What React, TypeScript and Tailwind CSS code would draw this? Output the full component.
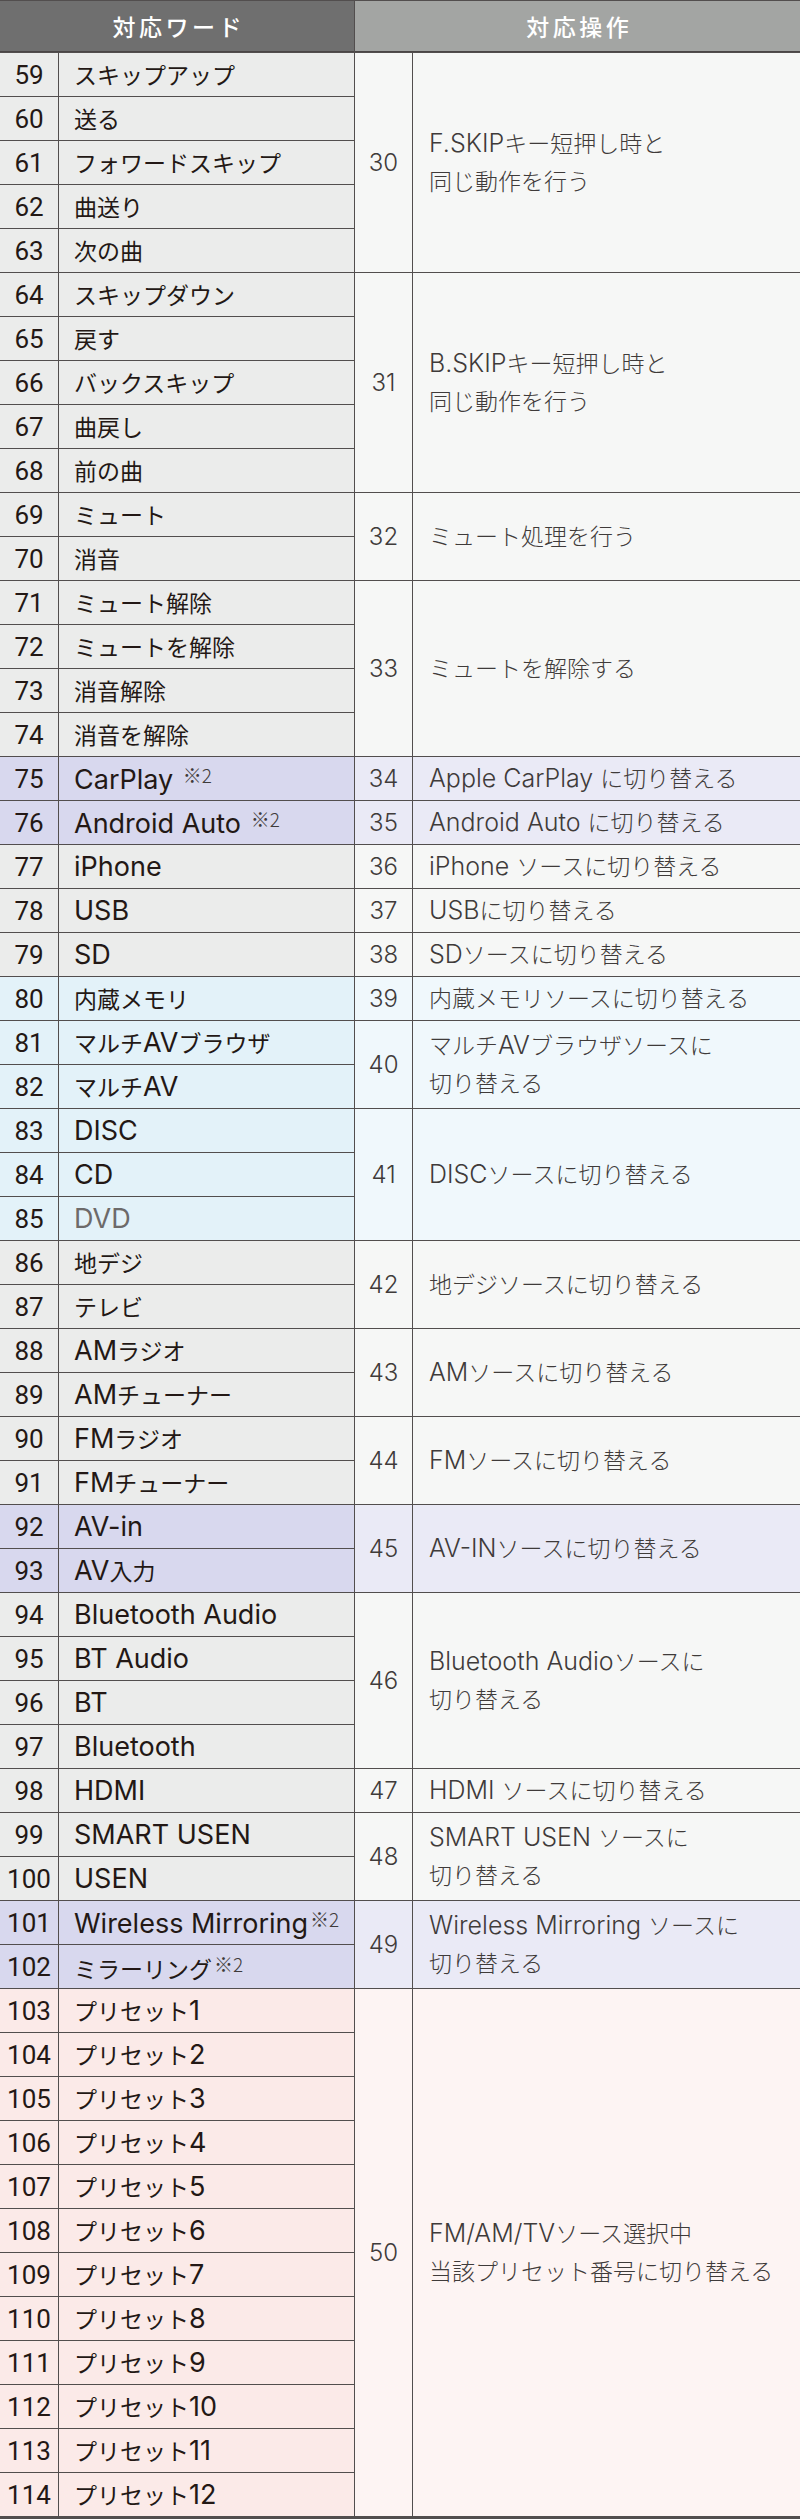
import React from "react";

type Tone = "gray" | "purple" | "blue" | "pink";

type Word = { no: number; text: string; note?: boolean; muted?: boolean };
type Group = { code: number; action: string[]; tone: Tone; words: Word[] };

const leftBg: Record<Tone, string> = {
  gray: "bg-[#ebeceb]",
  purple: "bg-[#d8d8ee]",
  blue: "bg-[#e3f2f9]",
  pink: "bg-[#fbeae8]",
};

const rightBg: Record<Tone, string> = {
  gray: "bg-[#f6f7f6]",
  purple: "bg-[#eaeaf6]",
  blue: "bg-[#f0f8fc]",
  pink: "bg-[#fdf4f3]",
};

const spans: Record<number, string> = {
  1: "row-span-1",
  2: "row-span-2",
  3: "row-span-3",
  4: "row-span-4",
  5: "row-span-5",
  12: "row-span-12",
};

const w = (no: number, text: string, extra: Partial<Word> = {}): Word => ({ no, text, ...extra });

const groups: Group[] = [
  {
    code: 30,
    tone: "gray",
    action: ["F.SKIPキー短押し時と", "同じ動作を行う"],
    words: [w(59, "スキップアップ"), w(60, "送る"), w(61, "フォワードスキップ"), w(62, "曲送り"), w(63, "次の曲")],
  },
  {
    code: 31,
    tone: "gray",
    action: ["B.SKIPキー短押し時と", "同じ動作を行う"],
    words: [w(64, "スキップダウン"), w(65, "戻す"), w(66, "バックスキップ"), w(67, "曲戻し"), w(68, "前の曲")],
  },
  { code: 32, tone: "gray", action: ["ミュート処理を行う"], words: [w(69, "ミュート"), w(70, "消音")] },
  {
    code: 33,
    tone: "gray",
    action: ["ミュートを解除する"],
    words: [w(71, "ミュート解除"), w(72, "ミュートを解除"), w(73, "消音解除"), w(74, "消音を解除")],
  },
  { code: 34, tone: "purple", action: ["Apple CarPlay に切り替える"], words: [w(75, "CarPlay ", { note: true })] },
  { code: 35, tone: "purple", action: ["Android Auto に切り替える"], words: [w(76, "Android Auto ", { note: true })] },
  { code: 36, tone: "gray", action: ["iPhone ソースに切り替える"], words: [w(77, "iPhone")] },
  { code: 37, tone: "gray", action: ["USBに切り替える"], words: [w(78, "USB")] },
  { code: 38, tone: "gray", action: ["SDソースに切り替える"], words: [w(79, "SD")] },
  { code: 39, tone: "blue", action: ["内蔵メモリソースに切り替える"], words: [w(80, "内蔵メモリ")] },
  {
    code: 40,
    tone: "blue",
    action: ["マルチAVブラウザソースに", "切り替える"],
    words: [w(81, "マルチAVブラウザ"), w(82, "マルチAV")],
  },
  {
    code: 41,
    tone: "blue",
    action: ["DISCソースに切り替える"],
    words: [w(83, "DISC"), w(84, "CD"), w(85, "DVD", { muted: true })],
  },
  { code: 42, tone: "gray", action: ["地デジソースに切り替える"], words: [w(86, "地デジ"), w(87, "テレビ")] },
  { code: 43, tone: "gray", action: ["AMソースに切り替える"], words: [w(88, "AMラジオ"), w(89, "AMチューナー")] },
  { code: 44, tone: "gray", action: ["FMソースに切り替える"], words: [w(90, "FMラジオ"), w(91, "FMチューナー")] },
  { code: 45, tone: "purple", action: ["AV-INソースに切り替える"], words: [w(92, "AV-in"), w(93, "AV入力")] },
  {
    code: 46,
    tone: "gray",
    action: ["Bluetooth Audioソースに", "切り替える"],
    words: [w(94, "Bluetooth Audio"), w(95, "BT Audio"), w(96, "BT"), w(97, "Bluetooth")],
  },
  { code: 47, tone: "gray", action: ["HDMI ソースに切り替える"], words: [w(98, "HDMI")] },
  {
    code: 48,
    tone: "gray",
    action: ["SMART USEN ソースに", "切り替える"],
    words: [w(99, "SMART USEN"), w(100, "USEN")],
  },
  {
    code: 49,
    tone: "purple",
    action: ["Wireless Mirroring ソースに", "切り替える"],
    words: [w(101, "Wireless Mirroring", { note: true }), w(102, "ミラーリング", { note: true })],
  },
  {
    code: 50,
    tone: "pink",
    action: ["FM/AM/TVソース選択中", "当該プリセット番号に切り替える"],
    words: Array.from({ length: 12 }, (_, i) => w(103 + i, `プリセット${i + 1}`)),
  },
];

const isLatin = (s: string) => /^[\x20-\x7E]+$/.test(s);

function Mixed({ text, latin, jp }: { text: string; latin: string; jp: string }) {
  const parts = text.split(/([\x20-\x7E]+)/).filter(Boolean);
  return (
    <>
      {parts.map((p, i) => (
        <span key={i} className={isLatin(p) ? latin : jp}>
          {p}
        </span>
      ))}
    </>
  );
}

export default function App() {
  return (
    <div className="w-[800px] bg-white">
      <div className="grid grid-cols-[58px_295px_57px_1fr] grid-rows-[51px_repeat(56,43px)] gap-px bg-[#524e4e] pt-px pb-[3px]">
        {/* header */}
        <div className="col-span-2 flex items-center justify-center border-b border-[#4a4646] bg-[#6f6f6f] pl-[0.15em] font-['Noto_Sans_CJK_JP',sans-serif] text-[23px] font-medium tracking-[0.15em] text-white">
          対応ワード
        </div>
        <div className="col-span-2 flex items-center justify-center border-b border-[#4a4646] bg-[#a3a5a3] pl-[0.15em] font-['Noto_Sans_CJK_JP',sans-serif] text-[23px] font-medium tracking-[0.15em] text-white">
          対応操作
        </div>

        {groups.map((g) =>
          g.words.map((wd, i) => (
            <React.Fragment key={wd.no}>
              <div
                className={`${leftBg[g.tone]} flex items-center justify-center font-['Roboto',sans-serif] text-[26px] leading-none text-[#231815]`}
              >
                {wd.no}
              </div>
              <div
                className={`${leftBg[g.tone]} flex items-center pl-[15px] leading-none whitespace-nowrap ${
                  wd.muted ? "text-[#6d6a6a]" : "text-[#231815]"
                }`}
              >
                <span>
                  <Mixed
                    text={wd.text}
                    latin="font-['Inter','Noto_Sans_CJK_JP',sans-serif] text-[27px]"
                    jp="font-['Noto_Sans_CJK_JP',sans-serif] text-[23px]"
                  />
                  {wd.note && (
                    <span className="ml-[2px] align-[6px] font-['Noto_Sans_CJK_JP',sans-serif] text-[19px] font-light text-[#3f3b3a]">
                      ※2
                    </span>
                  )}
                </span>
              </div>
              {i === 0 && (
                <>
                  <div
                    className={`${rightBg[g.tone]} ${spans[g.words.length]} flex items-center justify-center font-['Inter',sans-serif] text-[24px] font-light leading-none text-[#3f3b3a]`}
                  >
                    {g.code}
                  </div>
                  <div
                    className={`${rightBg[g.tone]} ${spans[g.words.length]} flex items-center pl-4 text-[#3f3b3a] leading-[34px]`}
                  >
                    <div>
                      {g.action.map((line, j) => (
                        <div key={j} className="whitespace-nowrap">
                          <Mixed
                            text={line}
                            latin="font-['Inter','Noto_Sans_CJK_JP',sans-serif] text-[25px] font-light"
                            jp="font-['Noto_Sans_CJK_JP',sans-serif] text-[23px] font-light"
                          />
                        </div>
                      ))}
                    </div>
                  </div>
                </>
              )}
            </React.Fragment>
          ))
        )}
      </div>
    </div>
  );
}
